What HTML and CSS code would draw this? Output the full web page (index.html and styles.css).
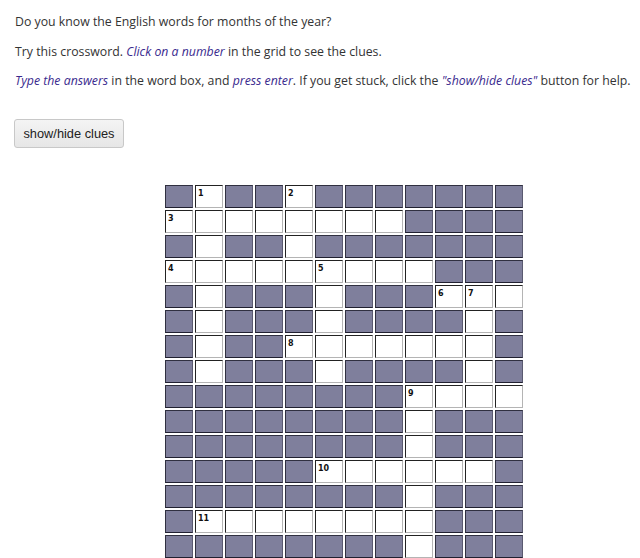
FILE: index.html
```html
<!DOCTYPE html>
<html>
<head>
<meta charset="utf-8">
<link rel="stylesheet" href="styles.css">
</head>
<body>
<div class="page">
  <p>Do you know the English words for months of the year?</p>
  <p>Try this crossword. <em class="hl">Click on a number</em> in the grid to see the clues.</p>
  <p><em class="hl">Type the answers</em> in the word box, and <em class="hl">press enter</em>. If you get stuck, click the <em class="hl">"show/hide clues"</em> button for help.</p>
  <button class="btn">show/hide clues</button>
  <div class="grid" id="grid"></div>
</div>
<script src="app.js"></script>
</body>
</html>
```
FILE: styles.css
```css
html, body { margin: 0; padding: 0; background: #fff; }
body { font-family: "Open Sans", "Liberation Sans", sans-serif; color: #333; font-size: 12.3px; }
.page { padding: 12px 0 0 15px; }
p { margin: 0 0 9.5px 0; line-height: 20px; white-space: nowrap; }
.hl { color: #3a2a8e; font-style: italic; }
.btn {
  display: block;
  margin: 28px 0 0 -1px;
  width: 110px; height: 29px;
  border: 1px solid #c8c8c8;
  border-radius: 3px;
  background: linear-gradient(#f4f4f4, #e6e6e6);
  font-family: "Liberation Sans", Arial, sans-serif;
  font-size: 12.8px;
  color: #222;
  padding: 0;
}
.grid {
  margin: 37px 0 0 150px;
  display: grid;
  grid-template-columns: repeat(12, 28px);
  grid-auto-rows: 23px;
  gap: 2px;
}
.c {
  position: relative;
  box-sizing: border-box;
  border: 1px solid;
  border-color: #222 #b4b4b4 #b4b4b4 #222;
  background: #fff;
}
.c.d {
  background: #7f7f9c;
  border-color: #303040 #5a5a70 #202030 #303040;
}
.n {
  position: absolute;
  left: 2px; top: 3px;
  font-family: "DejaVu Sans", Verdana, sans-serif;
  font-weight: bold;
  font-size: 8px;
  line-height: 9px;
  color: #111;
}
```
FILE: app.js
```js
var rows = [
  "#.##.#######",
  "........####",
  "#.##.#######",
  ".........###",
  "#.###.###...",
  "#.###.####.#",
  "#.##.......#",
  "#.###.####.#",
  "########....",
  "########.###",
  "########.###",
  "#####......#",
  "########.###",
  "#........###",
  "########.###",
  "########.###"
];
var nums = {"0,1":"1","0,4":"2","1,0":"3","3,0":"4","3,5":"5","4,9":"6","4,10":"7","6,4":"8","8,8":"9","11,5":"10","13,1":"11"};
var g = document.getElementById("grid");
rows.forEach(function (r, i) {
  for (var j = 0; j < r.length; j++) {
    var d = document.createElement("div");
    d.className = "c" + (r[j] === "#" ? " d" : "");
    var k = i + "," + j;
    if (nums[k]) {
      var s = document.createElement("span");
      s.className = "n";
      s.textContent = nums[k];
      d.appendChild(s);
    }
    g.appendChild(d);
  }
});
```
